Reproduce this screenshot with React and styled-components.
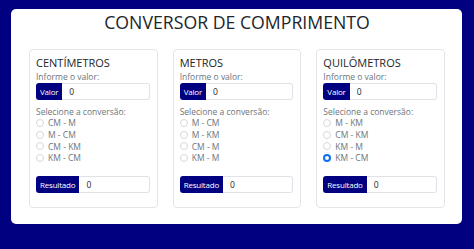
import React from 'react'
import styled, { createGlobalStyle } from 'styled-components'

const GlobalStyle = createGlobalStyle`
  html, body {
    margin: 0;
    padding: 0;
    background: #000080;
    font-family: "Open Sans", "Noto Sans", sans-serif;
    color: #212529;
  }
  body {
    height: 249px;
    overflow: hidden;
  }
`

const Page = styled.div`
  padding: 9px 12px 0 11px;
`

const Container = styled.main`
  background: #fff;
  border-radius: 5px;
  height: 215px;
  box-sizing: border-box;
  padding: 0 17px 0 18px;
`

const Title = styled.h1`
  margin: 0;
  padding-top: 1px;
  font-size: 17.7px;
  line-height: 25px;
  font-weight: 400;
  text-align: center;
  color: #212529;
`

const Cards = styled.div`
  display: flex;
  gap: 15px;
  margin-top: 14px;
`

const Card = styled.section`
  flex: 1;
  min-width: 0;
  border: 1px solid #e3e5e8;
  border-radius: 4px;
  padding: 6px 7px 14px 6px;
`

const CardTitle = styled.h2`
  margin: 0;
  font-size: 11px;
  line-height: 14px;
  font-weight: 500;
  color: #212529;
`

const Label = styled.div`
  font-size: 8.5px;
  line-height: 11px;
  color: #6c757d;
  margin-top: ${p => p.$top || 0}px;
`

const Group = styled.div`
  display: flex;
  height: 17px;
  margin-top: ${p => p.$top || 0}px;
`

const Addon = styled.span`
  display: flex;
  align-items: center;
  flex-shrink: 0;
  padding: 0 4px 0 4px;
  background: #000080;
  color: #fff;
  font-size: 8px;
  letter-spacing: -0.2px;
  border-radius: 3px 0 0 3px;
`

const Field = styled.input`
  flex: 1;
  width: 0;
  min-width: 0;
  box-sizing: border-box;
  height: 17px;
  border: 1px solid #dfe2e6;
  border-left: none;
  border-radius: 0 3px 3px 0;
  padding: 0 0 0 7px;
  font-family: inherit;
  font-size: 8.5px;
  color: #212529;
  background: #fff;
  outline: none;
`

const Options = styled.div`
  margin-top: 0;
`

const Option = styled.label`
  display: flex;
  align-items: center;
  height: 11.7px;
  font-size: 8.5px;
  color: #6c757d;
  gap: 4px;
`

const Radio = styled.input.attrs({ type: 'radio' })`
  appearance: none;
  margin: 0;
  width: 8px;
  height: 8px;
  border-radius: 50%;
  border: 1px solid #d4d8dc;
  background: #fff;
  box-sizing: border-box;
  &:checked {
    border: 2.5px solid #0d6efd;
    background: #fff;
  }
`

const units = [
  { title: 'CENTÍMETROS', options: ['CM - M', 'M - CM', 'CM - KM', 'KM - CM'] },
  { title: 'METROS', options: ['M - CM', 'M - KM', 'CM - M', 'KM - M'] },
  { title: 'QUILÔMETROS', options: ['M - KM', 'CM - KM', 'KM - M', 'KM - CM'], checked: 3 },
]

export default function App() {
  return (
    <>
      <GlobalStyle />
      <Page>
        <Container>
          <Title>CONVERSOR DE COMPRIMENTO</Title>
          <Cards>
            {units.map((u, i) => (
              <Card key={u.title}>
                <CardTitle>{u.title}</CardTitle>
                <Label $top={1}>Informe o valor:</Label>
                <Group $top={1}>
                  <Addon>Valor</Addon>
                  <Field defaultValue="0" />
                </Group>
                <Label $top={6}>Selecione a conversão:</Label>
                <Options>
                  {u.options.map((o, j) => (
                    <Option key={o}>
                      <Radio name={'conv' + i} defaultChecked={u.checked === j} />
                      {o}
                    </Option>
                  ))}
                </Options>
                <Group $top={12}>
                  <Addon>Resultado</Addon>
                  <Field defaultValue="0" />
                </Group>
              </Card>
            ))}
          </Cards>
        </Container>
      </Page>
    </>
  )
}
